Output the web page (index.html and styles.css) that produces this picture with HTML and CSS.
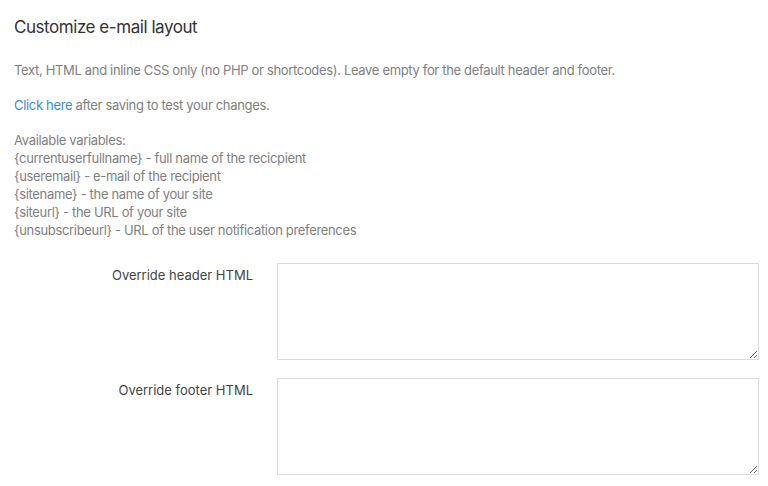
FILE: index.html
```html
<!DOCTYPE html>
<html>
<head>
<meta charset="utf-8">
<link rel="stylesheet" href="styles.css">
</head>
<body>
<div class="page">
  <h3 class="title">Customize e-mail layout</h3>
  <p class="note">Text, HTML and inline CSS only (no PHP or shortcodes). Leave empty for the default header and footer.</p>
  <p class="note"><a href="#" class="link">Click here</a> after saving to test your changes.</p>
  <p class="note">Available variables:<br>{currentuserfullname} - full name of the recicpient<br>{useremail} - e-mail of the recipient<br>{sitename} - the name of your site<br>{siteurl} - the URL of your site<br>{unsubscribeurl} - URL of the user notification preferences</p>
  <div class="form">
    <div class="row">
      <label class="label">Override header HTML</label>
      <textarea class="field"></textarea>
    </div>
    <div class="row">
      <label class="label">Override footer HTML</label>
      <textarea class="field"></textarea>
    </div>
  </div>
</div>
</body>
</html>
```
FILE: styles.css
```css
html, body {
  margin: 0;
  padding: 0;
  background: #fff;
}
.page {
  padding: 15px 9px 0 14px;
  font-family: "Inter", "Liberation Sans", sans-serif;
  font-size: 13px;
  line-height: 18px;
  letter-spacing: -0.33px;
  color: #808080;
}
.title {
  margin: 0 0 22px 0;
  font-size: 17px;
  line-height: 24px;
  font-weight: normal;
  letter-spacing: -0.45px;
  color: #333;
}
.note {
  margin: 0 0 17px 0;
}
.link {
  color: #3d8bd3;
  text-decoration: none;
}
.form {
  display: flex;
  flex-direction: column;
  gap: 18px;
  padding-top: 7px;
}
.row {
  display: grid;
  grid-template-columns: 239px 1fr;
  column-gap: 24px;
}
.label {
  text-align: right;
  color: #444;
  font-size: 13px;
  line-height: 18px;
  letter-spacing: 0;
  padding-top: 3px;
}
.field {
  height: 97px;
  box-sizing: border-box;
  border: 1px solid #dcdcdc;
  border-radius: 0;
  margin: 0;
  resize: vertical;
}
```
